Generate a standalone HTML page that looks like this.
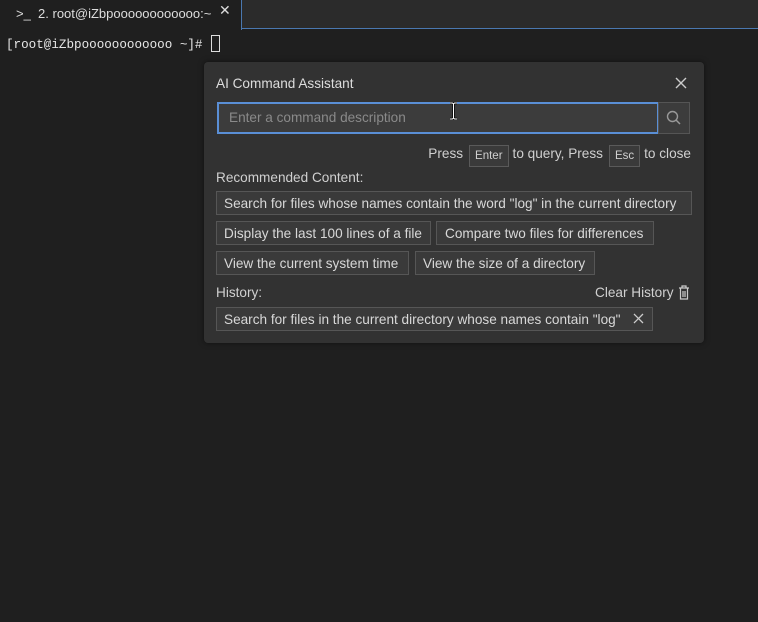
<!DOCTYPE html>
<html><head><style>
*{box-sizing:border-box;margin:0;padding:0}
body{width:758px;height:622px;background:#1f1f1f;font-family:"Liberation Sans",sans-serif;color:#d0d0d0;position:relative;overflow:hidden}
.tabbar{position:absolute;left:0;top:0;width:758px;height:29px;background:#2b2b2b;border-bottom:1px solid #4a78b0}
.tab{position:absolute;left:0;top:0;width:242px;height:30px;background:#1f1f1f;border-right:1px solid #4a78b0;font-size:13px;color:#ddd;padding:6px 0 0 16px}
.tab .x{position:absolute;left:219px;top:2px;font-size:14px}
.prompt{position:absolute;left:6px;top:35px;font-family:"Liberation Mono",monospace;font-size:12.6px;color:#e6e6e6}
.cur{display:inline-block;width:9px;height:17px;border:1px solid #ddd;vertical-align:-4px;margin-left:8px}
.panel{position:absolute;left:204px;top:62px;width:500px;height:281px;background:#323232;border-radius:4px;box-shadow:0 0 6px rgba(0,0,0,.5)}
.abs{position:absolute;font-size:13.6px;white-space:nowrap}
.input{position:absolute;left:13px;top:40px;width:442px;height:32px;background:#3c3c3c;border:2px solid #5a8fd6;color:#8a8a8a;font-size:13.6px;padding:6px 0 0 10px}
.sbtn{position:absolute;left:454px;top:40px;width:32px;height:32px;background:#3c3c3c;border:1px solid #555}
.key{display:inline-block;border:1px solid #5a5a5a;background:#3a3a3a;font-size:11.5px;padding:4px 5px;margin:0 4px 0 6px;vertical-align:-1px}
.chip{position:absolute;height:24px;background:#3a3a3a;border:1px solid #565656;font-size:13.6px;padding:4px 0 0 7px;white-space:nowrap;color:#d8d8d8}
</style></head><body>
<div class="tabbar"></div>
<div class="tab">&gt;_&nbsp; 2. root@iZbpoooooooooooo:~<span class="x">✕</span></div>
<div class="prompt">[root@iZbpoooooooooooo ~]#<span class="cur"></span></div>
<div class="panel">
 <div class="abs" style="left:12px;top:14px;color:#ddd">AI Command Assistant</div>
 <svg style="position:absolute;left:471px;top:15px" width="12" height="12"><path d="M1 1L11 11M11 1L1 11" stroke="#ccc" stroke-width="1.4"/></svg>
 <div class="input">Enter a command description</div>
 <div class="sbtn"><svg width="30" height="30"><circle cx="13.5" cy="13.5" r="5" stroke="#999" stroke-width="1.4" fill="none"/><path d="M17 17L21 21" stroke="#999" stroke-width="1.5"/></svg></div>
 <div class="abs" style="right:13px;top:83px">Press<span class="key">Enter</span>to query, Press<span class="key">Esc</span>to close</div>
 <div class="abs" style="left:12px;top:108px">Recommended Content:</div>
 <div class="chip" style="left:12px;top:129px;width:476px">Search for files whose names contain the word "log" in the current directory</div>
 <div class="chip" style="left:12px;top:159px;width:215px">Display the last 100 lines of a file</div>
 <div class="chip" style="left:232px;top:159px;width:218px;padding-left:8px">Compare two files for differences</div>
 <div class="chip" style="left:12px;top:189px;width:193px">View the current system time</div>
 <div class="chip" style="left:211px;top:189px;width:180px">View the size of a directory</div>
 <div class="abs" style="left:12px;top:223px">History:</div>
 <div class="abs" style="left:391px;top:223px">Clear History</div>
 <svg style="position:absolute;left:474px;top:223px" width="12" height="15"><path d="M1 3H11M4 3V1H8V3M2.5 3V14H9.5V3M5 6V12M7 6V12" stroke="#ccc" stroke-width="1.2" fill="none"/></svg>
 <div class="chip" style="left:12px;top:245px;width:437px">Search for files in the current directory whose names contain "log"</div>
 <svg style="position:absolute;left:429px;top:251px" width="11" height="11"><path d="M1 1L10 10M10 1L1 10" stroke="#ccc" stroke-width="1.3"/></svg>
</div>
<svg style="position:absolute;left:448px;top:102px" width="11" height="18"><path d="M2 1H4.5L5.5 2L6.5 1H9M5.5 2V16M2 17H4.5L5.5 16L6.5 17H9" stroke="#000" stroke-width="2.4" fill="none"/><path d="M2 1H4.5L5.5 2L6.5 1H9M5.5 2V16M2 17H4.5L5.5 16L6.5 17H9" stroke="#fff" stroke-width="1" fill="none"/></svg>
</body></html>
